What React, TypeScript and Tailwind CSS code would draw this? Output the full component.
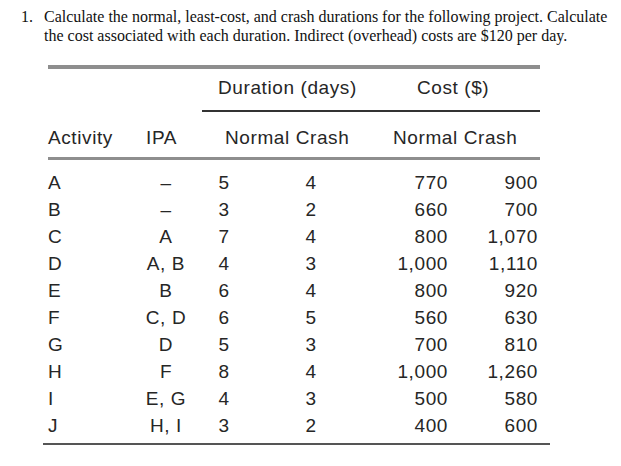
const ROWS = [
  ['A', '–', '5', '4', '770', '900'],
  ['B', '–', '3', '2', '660', '700'],
  ['C', 'A', '7', '4', '800', '1,070'],
  ['D', 'A, B', '4', '3', '1,000', '1,110'],
  ['E', 'B', '6', '4', '800', '920'],
  ['F', 'C, D', '6', '5', '560', '630'],
  ['G', 'D', '5', '3', '700', '810'],
  ['H', 'F', '8', '4', '1,000', '1,260'],
  ['I', 'E, G', '4', '3', '500', '580'],
  ['J', 'H, I', '3', '2', '400', '600'],
];

export default function App() {
  return (
    <div className="w-[621px] h-[466px] bg-white overflow-hidden">
      {/* question text */}
      <div className="flex pt-[7px] pl-[21px] font-['Liberation_Serif',serif] text-[16px] leading-[19px] text-[#111]">
        <span className="w-[23px] shrink-0">1.</span>
        <p>
          Calculate the normal, least-cost, and crash durations for the following project. Calculate
          <br />
          the cost associated with each duration. Indirect (overhead) costs are $120 per day.
        </p>
      </div>

      {/* table */}
      <div className="mt-[20px] ml-[43px] w-[507px] font-['Liberation_Sans',Arial,sans-serif] text-[19px] leading-[27px] tracking-[0.6px] text-[#262626]">
        <div className="ml-[5px] w-[492px]">
          <div className="h-[4px] bg-[#8e8e8e]" />

          <div className="flex mt-[5px]">
            <span className="ml-[170px]">Duration (days)</span>
            <span className="ml-[60px]">Cost ($)</span>
          </div>
          <div className="ml-[154px] mt-[9px] h-[2px] bg-[#333]" />

          <div className="flex mt-[12px]">
            <span className="w-[98px]">Activity</span>
            <span className="w-[79px]">IPA</span>
            <span className="w-[168px]">Normal Crash</span>
            <span>Normal Crash</span>
          </div>
          <div className="mt-[6px] h-[3px] bg-[#8e8e8e]" />

          <div className="mt-[9px]">
            {ROWS.map((r) => (
              <div key={r[0]} className="flex h-[27px]">
                <span className="w-[82px]">{r[0]}</span>
                <span className="w-[72px] text-center">{r[1]}</span>
                <span className="w-[44px] text-center">{r[2]}</span>
                <span className="w-[130px] text-center">{r[3]}</span>
                <span className="w-[72px] text-right">{r[4]}</span>
                <span className="w-[90px] text-right">{r[5]}</span>
              </div>
            ))}
          </div>
        </div>
        <div className="mt-[4px] h-[2px] bg-[#555]" />
      </div>
    </div>
  );
}
